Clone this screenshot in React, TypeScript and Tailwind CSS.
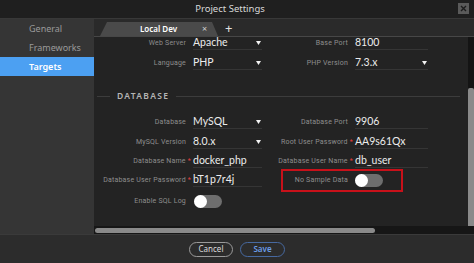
import React from 'react';

const LEFT_ROWS_TOP = [
  { label: 'Web Server', value: 'Apache', select: true },
  { label: 'Language', value: 'PHP', select: true },
];
const RIGHT_ROWS_TOP = [
  { label: 'Base Port', value: '8100', select: false },
  { label: 'PHP Version', value: '7.3.x', select: true },
];

function Arrow() {
  return (
    <svg width="5" height="4" viewBox="0 0 5 4" className="shrink-0">
      <polygon points="0,0 5,0 2.5,4" fill="#f2f2f2" />
    </svg>
  );
}

function Label({ text, req, w }: { text: string; req?: boolean; w: string }) {
  return (
    <div className={`${w} shrink-0 flex justify-end items-center pr-[7px] font-['Roboto',sans-serif] text-[7px] tracking-[0.2px] text-[#8e8e8e]`}>
      <span>{text}</span>
      {req && <span className="text-[#e23b3b] ml-[2px] -mr-[5px]">*</span>}
    </div>
  );
}

function Value({ text, select, w }: { text: string; select?: boolean; w: string }) {
  return (
    <div className={`${w} shrink-0 h-[14px] flex items-center justify-between border-b border-[#353535] pr-[1px]`}>
      <span className="font-['Lato',sans-serif] text-[10.5px] leading-none text-[#ececec]">{text}</span>
      {select && <Arrow />}
    </div>
  );
}

function Toggle() {
  return (
    <div className="w-[28px] h-[13px] rounded-full bg-[#6e6e6e] flex items-center">
      <div className="w-[13px] h-[13px] rounded-full bg-white" />
    </div>
  );
}

function Row({
  h,
  left,
  right,
}: {
  h: string;
  left: React.ReactNode;
  right: React.ReactNode;
}) {
  return (
    <div className={`${h} flex items-center`}>
      {left}
      {right}
    </div>
  );
}

export default function App() {
  return (
    <div className="w-[474px] h-[263px] flex flex-col overflow-hidden bg-[#1f1f1f] font-['Noto_Sans',sans-serif]">
      {/* title bar */}
      <div className="h-[19px] shrink-0 flex items-center border-b border-[#383838] relative">
        <div className="flex-1 text-center pr-[14px] text-[9.5px] text-[#d8d8d8]">Project Settings</div>
        <div className="absolute right-[5px] top-[3px] w-[11px] h-[11px] bg-[#5a5a5a] flex items-center justify-center">
          <svg width="7" height="7" viewBox="0 0 7 7">
            <path d="M1 1 L6 6 M6 1 L1 6" stroke="#1c1c1c" strokeWidth="1.4" />
          </svg>
        </div>
      </div>

      <div className="flex flex-1 min-h-0">
        {/* sidebar */}
        <div className="w-[94px] shrink-0 bg-[#353535] flex flex-col text-[9px]">
          <div className="h-[19px] flex items-center pl-[29px] text-[#9a9a9a]">General</div>
          <div className="h-[19px] flex items-center pl-[29px] text-[#9a9a9a]">Frameworks</div>
          <div className="h-[19px] flex items-center pl-[29px] bg-[#4ca0f2] text-white font-semibold">Targets</div>
        </div>

        {/* main */}
        <div className="flex-1 flex flex-col min-w-0">
          <div className="h-[18px] shrink-0 bg-[#2a2a2a] border-b border-[#474747] flex items-end pl-[6px]">
            <div className="relative w-[118px] h-[14px] flex items-center">
              <svg className="absolute inset-0" width="118" height="14" viewBox="0 0 118 14">
                <polygon points="0,14 7,0 112,0 118,14" fill="#4a4a4a" />
              </svg>
              <span className="relative ml-[40px] text-[8px] font-semibold text-white">Local Dev</span>
              <span className="relative ml-[25px] text-[9px] text-[#cfcfcf]">×</span>
            </div>
            <span className="ml-[7px] mb-[1px] text-[13px] leading-none text-[#e0e0e0]">+</span>
          </div>

          <div className="flex-1 flex min-h-0">
            <div className="flex-1 overflow-hidden bg-[#232323]">
              <div className="-mt-[4px]">
                {LEFT_ROWS_TOP.map((l, i) => (
                  <Row
                    key={l.label}
                    h="h-[20px]"
                    left={
                      <>
                        <Label text={l.label} w="w-[99px]" />
                        <Value text={l.value} select={l.select} w="w-[69px]" />
                      </>
                    }
                    right={
                      <>
                        <Label text={RIGHT_ROWS_TOP[i].label} w="w-[93px]" />
                        <Value text={RIGHT_ROWS_TOP[i].value} select={RIGHT_ROWS_TOP[i].select} w="w-[73px]" />
                      </>
                    }
                  />
                ))}

                <div className="mt-[15px] h-[16px] ml-[3px] w-[363px] flex items-center">
                  <div className="w-[13px] h-px bg-[#3c3c3c]" />
                  <span className="mx-[7px] text-[8.5px] font-semibold tracking-[1.3px] text-[#b5b5b5]">DATABASE</span>
                  <div className="flex-1 h-px bg-[#3c3c3c]" />
                </div>

                <div className="mt-[8px]">
                  <Row
                    h="h-[20px]"
                    left={
                      <>
                        <Label text="Database" w="w-[99px]" />
                        <Value text="MySQL" select w="w-[69px]" />
                      </>
                    }
                    right={
                      <>
                        <Label text="Database Port" w="w-[93px]" />
                        <Value text="9906" w="w-[73px]" />
                      </>
                    }
                  />
                  <Row
                    h="h-[20px]"
                    left={
                      <>
                        <Label text="MySQL Version" w="w-[99px]" />
                        <Value text="8.0.x" select w="w-[69px]" />
                      </>
                    }
                    right={
                      <>
                        <Label text="Root User Password" req w="w-[93px]" />
                        <Value text="AA9s61Qx" w="w-[73px]" />
                      </>
                    }
                  />
                  <Row
                    h="h-[18px]"
                    left={
                      <>
                        <Label text="Database Name" req w="w-[99px]" />
                        <Value text="docker_php" w="w-[69px]" />
                      </>
                    }
                    right={
                      <>
                        <Label text="Database User Name" req w="w-[93px]" />
                        <Value text="db_user" w="w-[73px]" />
                      </>
                    }
                  />
                  <Row
                    h="h-[20px]"
                    left={
                      <>
                        <Label text="Database User Password" req w="w-[99px]" />
                        <Value text="bT1p7r4j" w="w-[69px]" />
                      </>
                    }
                    right={
                      <div className="relative flex items-center">
                        <Label text="No Sample Data" w="w-[93px]" />
                        <Toggle />
                        <div className="absolute left-[19px] -top-[5px] w-[122px] h-[23px] border-2 border-[#c8111a]" />
                      </div>
                    }
                  />
                  <Row
                    h="h-[22px]"
                    left={
                      <>
                        <Label text="Enable SQL Log" w="w-[99px]" />
                        <div className="ml-[1px]">
                          <Toggle />
                        </div>
                      </>
                    }
                    right={null}
                  />
                </div>
              </div>
            </div>
            <div className="w-[6px] shrink-0 bg-[#141414] flex flex-col pt-[51px]">
              <div className="flex-1 bg-[#8a8a8a] rounded-t-[2px]" />
            </div>
          </div>

          <div className="h-[8px] shrink-0 bg-[#161616] flex items-center pl-[1px]">
            <div className="w-[280px] h-[5px] rounded-full bg-[#8a8a8a]" />
          </div>
        </div>
      </div>

      {/* footer */}
      <div className="h-[29px] shrink-0 bg-[#2c2c2c] border-t border-[#3a3a3a] flex items-center justify-center gap-[7px]">
        <div className="w-[44px] h-[15px] rounded-full border border-[#9a9a9a] flex items-center justify-center text-[8px] text-[#dcdcdc]">
          Cancel
        </div>
        <div className="w-[45px] h-[15px] rounded-full border border-[#4769a0] flex items-center justify-center text-[8px] text-[#6b9ce8] font-semibold">
          Save
        </div>
      </div>
    </div>
  );
}
